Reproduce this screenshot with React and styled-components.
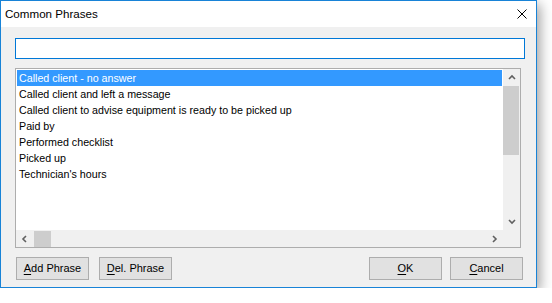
import React from "react"
import styled, { createGlobalStyle } from "styled-components"

const GlobalStyle = createGlobalStyle`
  html, body {
    margin: 0;
    padding: 0;
    background: #ffffff;
  }
  body {
    font-family: "Liberation Sans", Arial, sans-serif;
    font-size: 10.7px;
    color: #000000;
  }
`

const Window = styled.div`
  width: 537px;
  height: 288px;
  box-sizing: border-box;
  border: 1px solid #1883d7;
  display: flex;
  flex-direction: column;
  background: #f0f0f0;
  box-shadow: 3px 4px 12px rgba(0, 0, 0, 0.38);
`

const TitleBar = styled.div`
  height: 25px;
  flex: none;
  background: #ffffff;
  display: flex;
  align-items: center;
  padding: 0 9px 1px 4px;
`

const Title = styled.span`
  flex: 1;
  font-size: 11.6px;
`

const CloseButton = styled.div`
  width: 10px;
  height: 10px;
  display: flex;
  margin-top: 1px;
`

const Body = styled.div`
  flex: 1;
  display: flex;
  flex-direction: column;
  padding: 11px 11px 0 14px;
`

const TextInput = styled.div`
  height: 21px;
  box-sizing: border-box;
  border: 1px solid #0078d7;
  background: #ffffff;
`

const ListBox = styled.div`
  margin-top: 9px;
  width: 506px;
  height: 180px;
  box-sizing: border-box;
  border: 1px solid #adadad;
  background: #ffffff;
  display: grid;
  grid-template-columns: 487px 17px;
  grid-template-rows: 161px 17px;
`

const Items = styled.div`
  padding: 1px;
  overflow: hidden;
`

const Item = styled.div`
  height: 16px;
  line-height: 16px;
  padding-left: 2px;
  white-space: nowrap;
  background: ${p => (p.$selected ? "#3399ff" : "transparent")};
  color: ${p => (p.$selected ? "#ffffff" : "#000000")};
`

const VScroll = styled.div`
  background: #f0f0f0;
  display: flex;
  flex-direction: column;
`

const HScroll = styled.div`
  background: #f0f0f0;
  display: flex;
`

const ArrowButton = styled.div`
  width: 17px;
  height: 17px;
  flex: none;
  display: flex;
  align-items: center;
  justify-content: center;
`

const VThumb = styled.div`
  height: 69px;
  margin: 0 1px 0 0;
  background: #cdcdcd;
`

const HThumb = styled.div`
  width: 17px;
  margin: 1px 0 0 1px;
  background: #cdcdcd;
`

const Spacer = styled.div`
  flex: 1;
`

const Corner = styled.div`
  background: #f0f0f0;
`

const ButtonRow = styled.div`
  margin-top: 9px;
  padding: 0 0 0 1px;
  display: flex;
  gap: 10px;
`

const Button = styled.div`
  width: 73px;
  height: 23px;
  box-sizing: border-box;
  border: 1px solid #adadad;
  background: #e1e1e1;
  display: flex;
  align-items: center;
  justify-content: center;
  padding-bottom: 1px;
  font-size: 11px;
  u {
    text-decoration: underline;
    text-underline-offset: 2px;
  }
`

const RightButtons = styled.div`
  margin-left: auto;
  margin-right: 2px;
  display: flex;
  gap: 8px;
`

const Chevron = ({ dir }) => {
  const pts = {
    up: "1,5 4,2 7,5",
    down: "1,2 4,5 7,2",
    left: "5,1 2,4 5,7",
    right: "2,1 5,4 2,7",
  }[dir]
  return (
    <svg width="8" height="8" viewBox="0 0 8 8">
      <polyline points={pts} fill="none" stroke="#606060" strokeWidth="1.6" />
    </svg>
  )
}

const phrases = [
  "Called client - no answer",
  "Called client and left a message",
  "Called client to advise equipment is ready to be picked up",
  "Paid by",
  "Performed checklist",
  "Picked up",
  "Technician's hours",
]

const App = () => {
  return (
    <>
      <GlobalStyle />
      <Window>
        <TitleBar>
          <Title>Common Phrases</Title>
          <CloseButton>
            <svg width="10" height="10" viewBox="0 0 10 10">
              <path d="M0.5 0.5 L9.5 9.5 M9.5 0.5 L0.5 9.5" stroke="#000" strokeWidth="1" />
            </svg>
          </CloseButton>
        </TitleBar>
        <Body>
          <TextInput />
          <ListBox>
            <Items>
              {phrases.map((p, i) => (
                <Item key={p} $selected={i === 0}>
                  {p}
                </Item>
              ))}
            </Items>
            <VScroll>
              <ArrowButton>
                <Chevron dir="up" />
              </ArrowButton>
              <VThumb />
              <Spacer />
              <ArrowButton>
                <Chevron dir="down" />
              </ArrowButton>
            </VScroll>
            <HScroll>
              <ArrowButton>
                <Chevron dir="left" />
              </ArrowButton>
              <HThumb />
              <Spacer />
              <ArrowButton>
                <Chevron dir="right" />
              </ArrowButton>
            </HScroll>
            <Corner />
          </ListBox>
          <ButtonRow>
            <Button>
              <span>
                <u>A</u>dd Phrase
              </span>
            </Button>
            <Button>
              <span>
                <u>D</u>el. Phrase
              </span>
            </Button>
            <RightButtons>
              <Button>
                <span>
                  <u>O</u>K
                </span>
              </Button>
              <Button>
                <span>
                  <u>C</u>ancel
                </span>
              </Button>
            </RightButtons>
          </ButtonRow>
        </Body>
      </Window>
    </>
  )
}

export default App
